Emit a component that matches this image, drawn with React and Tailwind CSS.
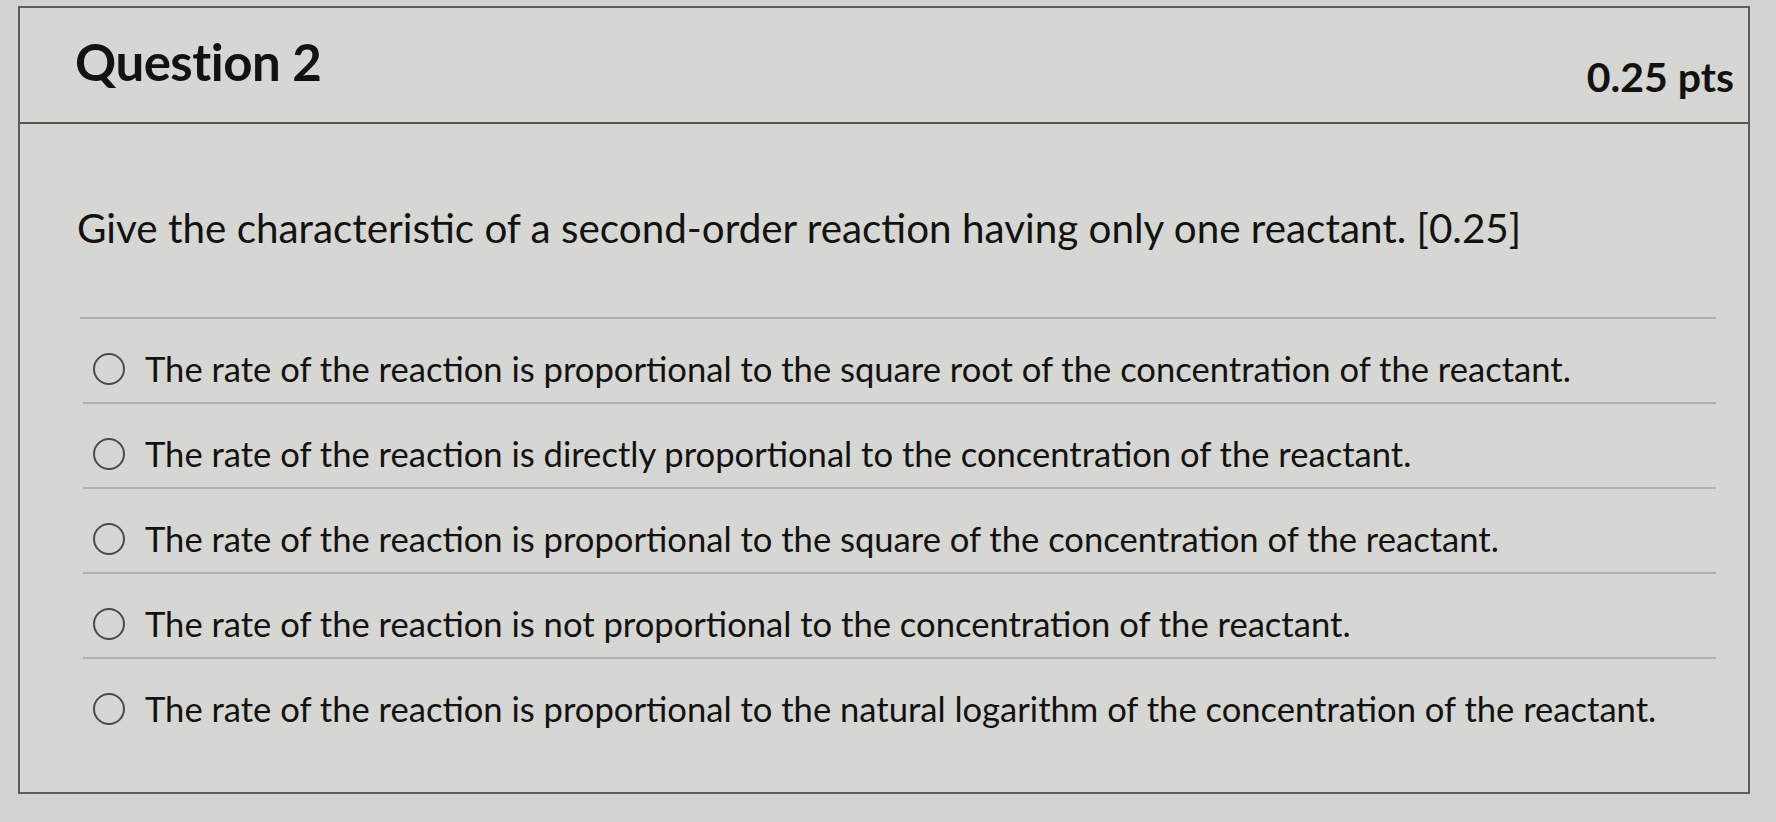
const OPTIONS = [
  'The rate of the reaction is proportional to the square root of the concentration of the reactant.',
  'The rate of the reaction is directly proportional to the concentration of the reactant.',
  'The rate of the reaction is proportional to the square of the concentration of the reactant.',
  'The rate of the reaction is not proportional to the concentration of the reactant.',
  'The rate of the reaction is proportional to the natural logarithm of the concentration of the reactant.',
]

export default function App() {
  return (
    <div className="min-h-screen bg-[#d2d2ce] pt-[6px] pl-[18px] pr-[26px] pb-[25px] font-['Lato','Noto_Sans',sans-serif] text-[#121212]">
      <div className="border-2 border-[#5c5c59] bg-[#d6d6d2]">
        {/* header */}
        <div className="flex justify-between items-start h-[116px] border-b-2 border-[#55554f] pl-[55px] pr-[14px]">
          <h2 className="mt-[24px] text-[51px] leading-[60px] font-bold tracking-[-0.5px]">Question 2</h2>
          <span className="mt-[44px] text-[41px] leading-[50px] font-bold">0.25 pts</span>
        </div>

        {/* body */}
        <div className="pt-[80px] pb-[50px]">
          <p className="pl-[57px] text-[40.4px] leading-[48px]">
            Give the characteristic of a second-order reaction having only one reactant. [0.25]
          </p>
          <div className="mt-[65px] ml-[60px] mr-[32px] border-t-2 border-[#aeaeaa]" />

          <div className="ml-[63px] mr-[32px]">
            {OPTIONS.map((text, i) => (
              <label
                key={i}
                className={`flex items-center gap-[20px] pl-[10px] pt-[32px] pb-[16px] ${i < OPTIONS.length - 1 ? 'border-b-2 border-[#b0b0ac]' : ''}`}
              >
                <span className="w-[32px] h-[32px] shrink-0 rounded-full border-[2.5px] border-[#4a4a48]" />
                <span className="text-[34.6px] leading-[35px]">{text}</span>
              </label>
            ))}
          </div>
        </div>
      </div>
    </div>
  )
}
